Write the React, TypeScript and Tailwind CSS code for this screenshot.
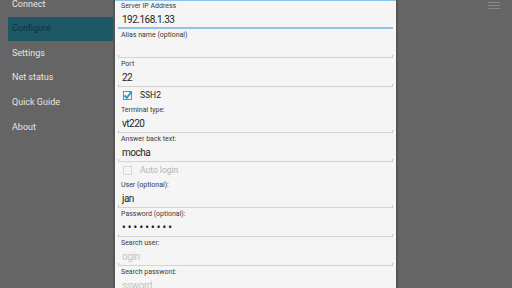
const menu = ["Connect", "Configure", "Settings", "Net status", "Quick Guide", "About"];

type FieldProps = {
  label: string;
  value?: string;
  hint?: boolean;
  focused?: boolean;
  password?: boolean;
};

function Field({ label, value, hint, focused, password }: FieldProps) {
  return (
    <div className="h-[29px] shrink-0 flex flex-col">
      <div className="h-[12px] pl-[6px] text-[7px] leading-[12px] text-[#3a3a3a]">{label}</div>
      <div
        className={
          "h-[16px] pl-[7px] leading-[16px] " +
          (hint ? "text-[10px] tracking-[-0.4px] text-[#c4c4c4]" : "text-[10px] tracking-[-0.5px] text-[#1e1e1e]") +
          (password ? " !tracking-[2.2px] font-bold" : "")
        }
      >
        {value}
      </div>
      <div className="mx-[3px] flex items-end h-[1px]">
        {focused ? (
          <div className="flex-1 h-[2px] bg-[#8cc3ea]" />
        ) : (
          <div className="flex-1 flex items-end">
            <div className="w-[1px] h-[3px] bg-[#c9c9c9]" />
            <div className="flex-1 h-[1px] bg-[#d3d3d3]" />
            <div className="w-[1px] h-[3px] bg-[#c9c9c9]" />
          </div>
        )}
      </div>
    </div>
  );
}

function Check({ label, checked }: { label: string; checked?: boolean }) {
  return (
    <div className="h-[17px] shrink-0 flex items-center pl-[8px] gap-[8px]">
      {checked ? (
        <svg width="9" height="9" viewBox="0 0 9 9" className="overflow-visible">
          <rect x="0.5" y="0.5" width="8" height="8" fill="none" stroke="#6b6b6b" strokeWidth="0.8" />
          <path d="M1.5 4.5 L3.8 6.8 L8.5 0.8" fill="none" stroke="#1b9bd0" strokeWidth="1.8" />
        </svg>
      ) : (
        <svg width="9" height="9" viewBox="0 0 9 9">
          <rect x="0.5" y="0.5" width="8" height="8" fill="none" stroke="#d2d2d2" strokeWidth="0.8" />
        </svg>
      )}
      <span className={"text-[8.5px] " + (checked ? "text-[#222]" : "text-[#b3b3b3]")}>{label}</span>
    </div>
  );
}

export default function App() {
  return (
    <div className="w-[512px] h-[288px] overflow-hidden flex bg-[#656565] font-['Roboto',sans-serif]">
      <div className="w-[113px] flex flex-col -mt-[8px]">
        {menu.map((m) => (
          <div
            key={m}
            className={
              "h-[24.6px] shrink-0 ml-[8px] pl-[4px] flex items-center text-[9px] " +
              (m === "Configure" ? "bg-[#1e5765] text-[#10323c]" : "text-[#e4e4e4]")
            }
          >
            {m}
          </div>
        ))}
      </div>
      <div className="w-[2px] bg-[#555]" />
      <div className="w-[281px] bg-[#f5f5f5] flex flex-col">
        <div className="h-[1px] shrink-0 bg-[#8cc3ea] -mb-[1px]" />
        <Field label="Server IP Address" value="192.168.1.33" focused />
        <Field label="Alias name (optional)" />
        <Field label="Port" value="22" />
        <Check label="SSH2" checked />
        <Field label="Terminal type:" value="vt220" />
        <Field label="Answer back text:" value="mocha" />
        <Check label="Auto login" />
        <Field label="User (optional):" value="jan" />
        <Field label="Password (optional):" value="•••••••••" password />
        <Field label="Search user:" value="ogin" hint />
        <Field label="Search password:" value="ssword" hint />
      </div>
      <div className="w-[2px] bg-[#555]" />
      <div className="flex-1 flex justify-end pr-[12px] pt-[2px]">
        <div className="w-[12px] flex flex-col gap-[2px]">
          <div className="h-[1px] bg-[#888]" />
          <div className="h-[1px] bg-[#888]" />
          <div className="h-[1px] bg-[#888]" />
        </div>
      </div>
    </div>
  );
}
